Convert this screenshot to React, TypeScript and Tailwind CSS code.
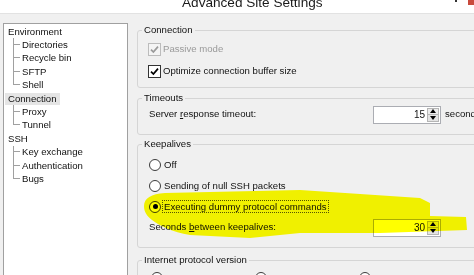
import React from "react";

const line = "border-[#a0a0a0]";

function TreeParent({ label, selected }: { label: string; selected?: boolean }) {
  return (
    <div className="h-[13.4px] flex items-center">
      <span className={`ml-[1px] px-[3px] leading-[12px] ${selected ? "bg-[#e5e5e5]" : ""}`}>{label}</span>
    </div>
  );
}

function TreeChild({ label, last }: { label: string; last?: boolean }) {
  return (
    <div className="h-[13.4px] flex">
      <div className="w-[18px] h-full flex flex-col shrink-0">
        <div className={`ml-[9px] w-[7px] h-1/2 border-l border-b ${line}`} />
        {!last && <div className={`ml-[9px] h-1/2 border-l ${line}`} />}
      </div>
      <div className="flex items-center leading-[12px]">{label}</div>
    </div>
  );
}

function Checkbox({ checked, disabled }: { checked?: boolean; disabled?: boolean }) {
  return (
    <div
      className={`w-[13px] h-[13px] border flex items-center justify-center shrink-0 ${
        disabled ? "border-[#bcbcbc] bg-[#f4f4f4]" : "border-[#333333] bg-white"
      }`}
    >
      {checked && (
        <svg width="9" height="9" viewBox="0 0 9 9">
          <path
            d="M1 4.6 L3.4 7 L8 1.6"
            fill="none"
            stroke={disabled ? "#9a9a9a" : "#000"}
            strokeWidth="1.7"
          />
        </svg>
      )}
    </div>
  );
}

function Radio({ checked }: { checked?: boolean }) {
  return (
    <div className="w-[12px] h-[12px] rounded-full border border-[#3c3c3c] bg-white flex items-center justify-center shrink-0">
      {checked && <div className="w-[5px] h-[5px] rounded-full bg-black" />}
    </div>
  );
}

function Spin({ value }: { value: string }) {
  return (
    <div className="w-[68px] h-[18px] border border-[#abadb3] bg-white flex items-stretch shrink-0">
      <div className="flex-1 flex items-center justify-end pr-[2px] text-[10px]">{value}</div>
      <div className="w-[13px] flex flex-col py-[1px] pr-[1px]">
        <div className="flex-1 border border-[#b5b5b5] bg-[#ececec] flex items-center justify-center">
          <svg width="6" height="4" viewBox="0 0 6 4">
            <path d="M0 4 L3 0 L6 4 Z" fill="#000" />
          </svg>
        </div>
        <div className="flex-1 border border-t-0 border-[#b5b5b5] bg-[#e4e4e4] flex items-center justify-center">
          <svg width="6" height="4" viewBox="0 0 6 4">
            <path d="M0 0 L3 4 L6 0 Z" fill="#000" />
          </svg>
        </div>
      </div>
    </div>
  );
}

function Group({
  title,
  className,
  children,
}: {
  title: string;
  className: string;
  children?: React.ReactNode;
}) {
  return (
    <fieldset className={`w-[345px] shrink-0 border border-[#d5d5d5] rounded-[3px] ${className}`}>
      <legend className="ml-[4px] px-[2px] leading-[14px]">{title}</legend>
      {children}
    </fieldset>
  );
}

export default function App() {
  return (
    <div className="relative w-[474px] h-[275px] overflow-hidden bg-[#f0f0f0] font-['Liberation_Sans',Arial,sans-serif] text-[9.6px] text-[#111]">
      {/* title bar */}
      <div className="h-[14px] bg-white border-b border-[#e2e2e2] flex items-start overflow-hidden">
        <div className="pl-[182px] -mt-[5px] leading-[16px] text-[13.6px] text-[#1a1a1a] whitespace-nowrap">
          Advanced Site Settings
        </div>
        <div className="ml-auto flex items-start">
          <div className="w-[2px] h-[2px] bg-[#333] mr-[11px]" />
          <div className="w-[6px] h-[5px] bg-[#c94a3d]" />
        </div>
      </div>

      <div className="flex items-start">
        {/* tree */}
        <div className="ml-[3px] mt-[9px] w-[125px] h-[260px] shrink-0 border border-[#a0a0a0] bg-white pt-[1px] whitespace-nowrap">
          <TreeParent label="Environment" />
          <TreeChild label="Directories" />
          <TreeChild label="Recycle bin" />
          <TreeChild label="SFTP" />
          <TreeChild label="Shell" last />
          <TreeParent label="Connection" selected />
          <TreeChild label="Proxy" />
          <TreeChild label="Tunnel" last />
          <TreeParent label="SSH" />
          <TreeChild label="Key exchange" />
          <TreeChild label="Authentication" />
          <TreeChild label="Bugs" last />
        </div>

        {/* right column */}
        <div className="ml-[9px] mt-[9px] flex flex-col shrink-0 whitespace-nowrap">
          <Group title="Connection" className="h-[65px]">
            <div className="pt-[1px]">
              <div className="h-[22px] flex items-center pl-[10px]">
                <Checkbox checked disabled />
                <span className="ml-[2px] text-[#9a9a9a]">Passive mode</span>
              </div>
              <div className="h-[22px] flex items-center pl-[10px]">
                <Checkbox checked />
                <span className="ml-[2px]">Optimize connection buffer size</span>
              </div>
            </div>
          </Group>

          <Group title="Timeouts" className="mt-[3px] h-[44px]">
            <div className="h-[19px] flex items-center">
              <div className="pl-[11px] w-[235px] shrink-0">
                Server <span className="underline">r</span>esponse timeout:
              </div>
              <Spin value="15" />
              <span className="ml-[4px]">seconds</span>
            </div>
          </Group>

          <Group title="Keepalives" className="mt-[2px] h-[111px]">
            <div className="pt-[3px]">
              <div className="h-[21px] flex items-center pl-[11px]">
                <Radio />
                <span className="ml-[1px] border border-transparent px-[1px] leading-[11px]">Off</span>
              </div>
              <div className="h-[21px] flex items-center pl-[11px]">
                <Radio />
                <span className="ml-[1px] border border-transparent px-[1px] leading-[11px]">
                  Sending of null SSH packets
                </span>
              </div>
              <div className="h-[21px] flex items-center pl-[11px]">
                <Radio checked />
                <span className="ml-[1px] border border-dotted border-[#555] px-[1px] leading-[11px]">
                  Executing dummy protocol commands
                </span>
              </div>
              <div className="h-[21px] flex items-center">
                <div className="pl-[11px] w-[235px] shrink-0">
                  Seconds <span className="underline">b</span>etween keepalives:
                </div>
                <Spin value="30" />
              </div>
            </div>
          </Group>

          <Group title="Internet protocol version" className="mt-[5px] h-[40px]">
            <div className="pt-[5px] flex">
              <div className="ml-[13px] w-[104px] flex items-start">
                <Radio checked />
                <span className="ml-[3px]">Auto</span>
              </div>
              <div className="w-[104px] flex items-start">
                <Radio />
                <span className="ml-[3px]">IPv4</span>
              </div>
              <div className="flex items-start">
                <Radio />
                <span className="ml-[3px]">IPv6</span>
              </div>
            </div>
          </Group>
        </div>
      </div>

      {/* highlighter stroke */}
      <svg
        className="absolute inset-0 pointer-events-none mix-blend-multiply"
        width="474"
        height="275"
        viewBox="0 0 474 275"
      >
        <path
          d="M144 206 C144 198 151 194 165 193 L300 190 L420 198 L430 203 L430 216 L466 217 L467 230 L380 233 L300 233 L250 238 L190 235 C172 232 160 226 152 220 C147 216 144 212 144 206 Z"
          fill="#ffff00"
        />
      </svg>
    </div>
  );
}
